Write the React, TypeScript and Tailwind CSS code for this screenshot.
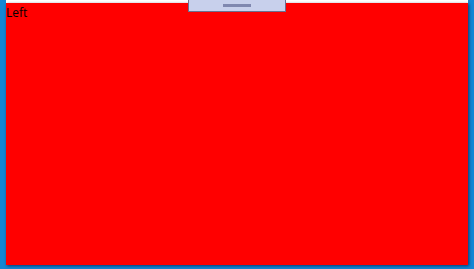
import React from 'react';

export default function App() {
  return (
    <div className="w-[474px] h-[269px] bg-[#1487d4] flex flex-col pl-[6px] pr-[6px] pb-[4px] relative overflow-hidden">
      <div className="h-[3px] bg-white shrink-0" />
      <div className="flex-1 bg-[#ff0000] shadow-[1px_1px_3px_rgba(0,0,40,0.6)]">
        <span className="block text-[12px] leading-[18px] pt-[1px] text-black font-['Open_Sans',sans-serif]">Left</span>
      </div>
      <div className="absolute left-[188px] top-0 w-[98px] h-[12px] bg-[#c8d0ec] border border-t-0 border-[#6a7090] flex items-start justify-center pt-[4px]">
        <div className="w-[28px] h-[3px] bg-[#8088b0]" />
      </div>
    </div>
  );
}
